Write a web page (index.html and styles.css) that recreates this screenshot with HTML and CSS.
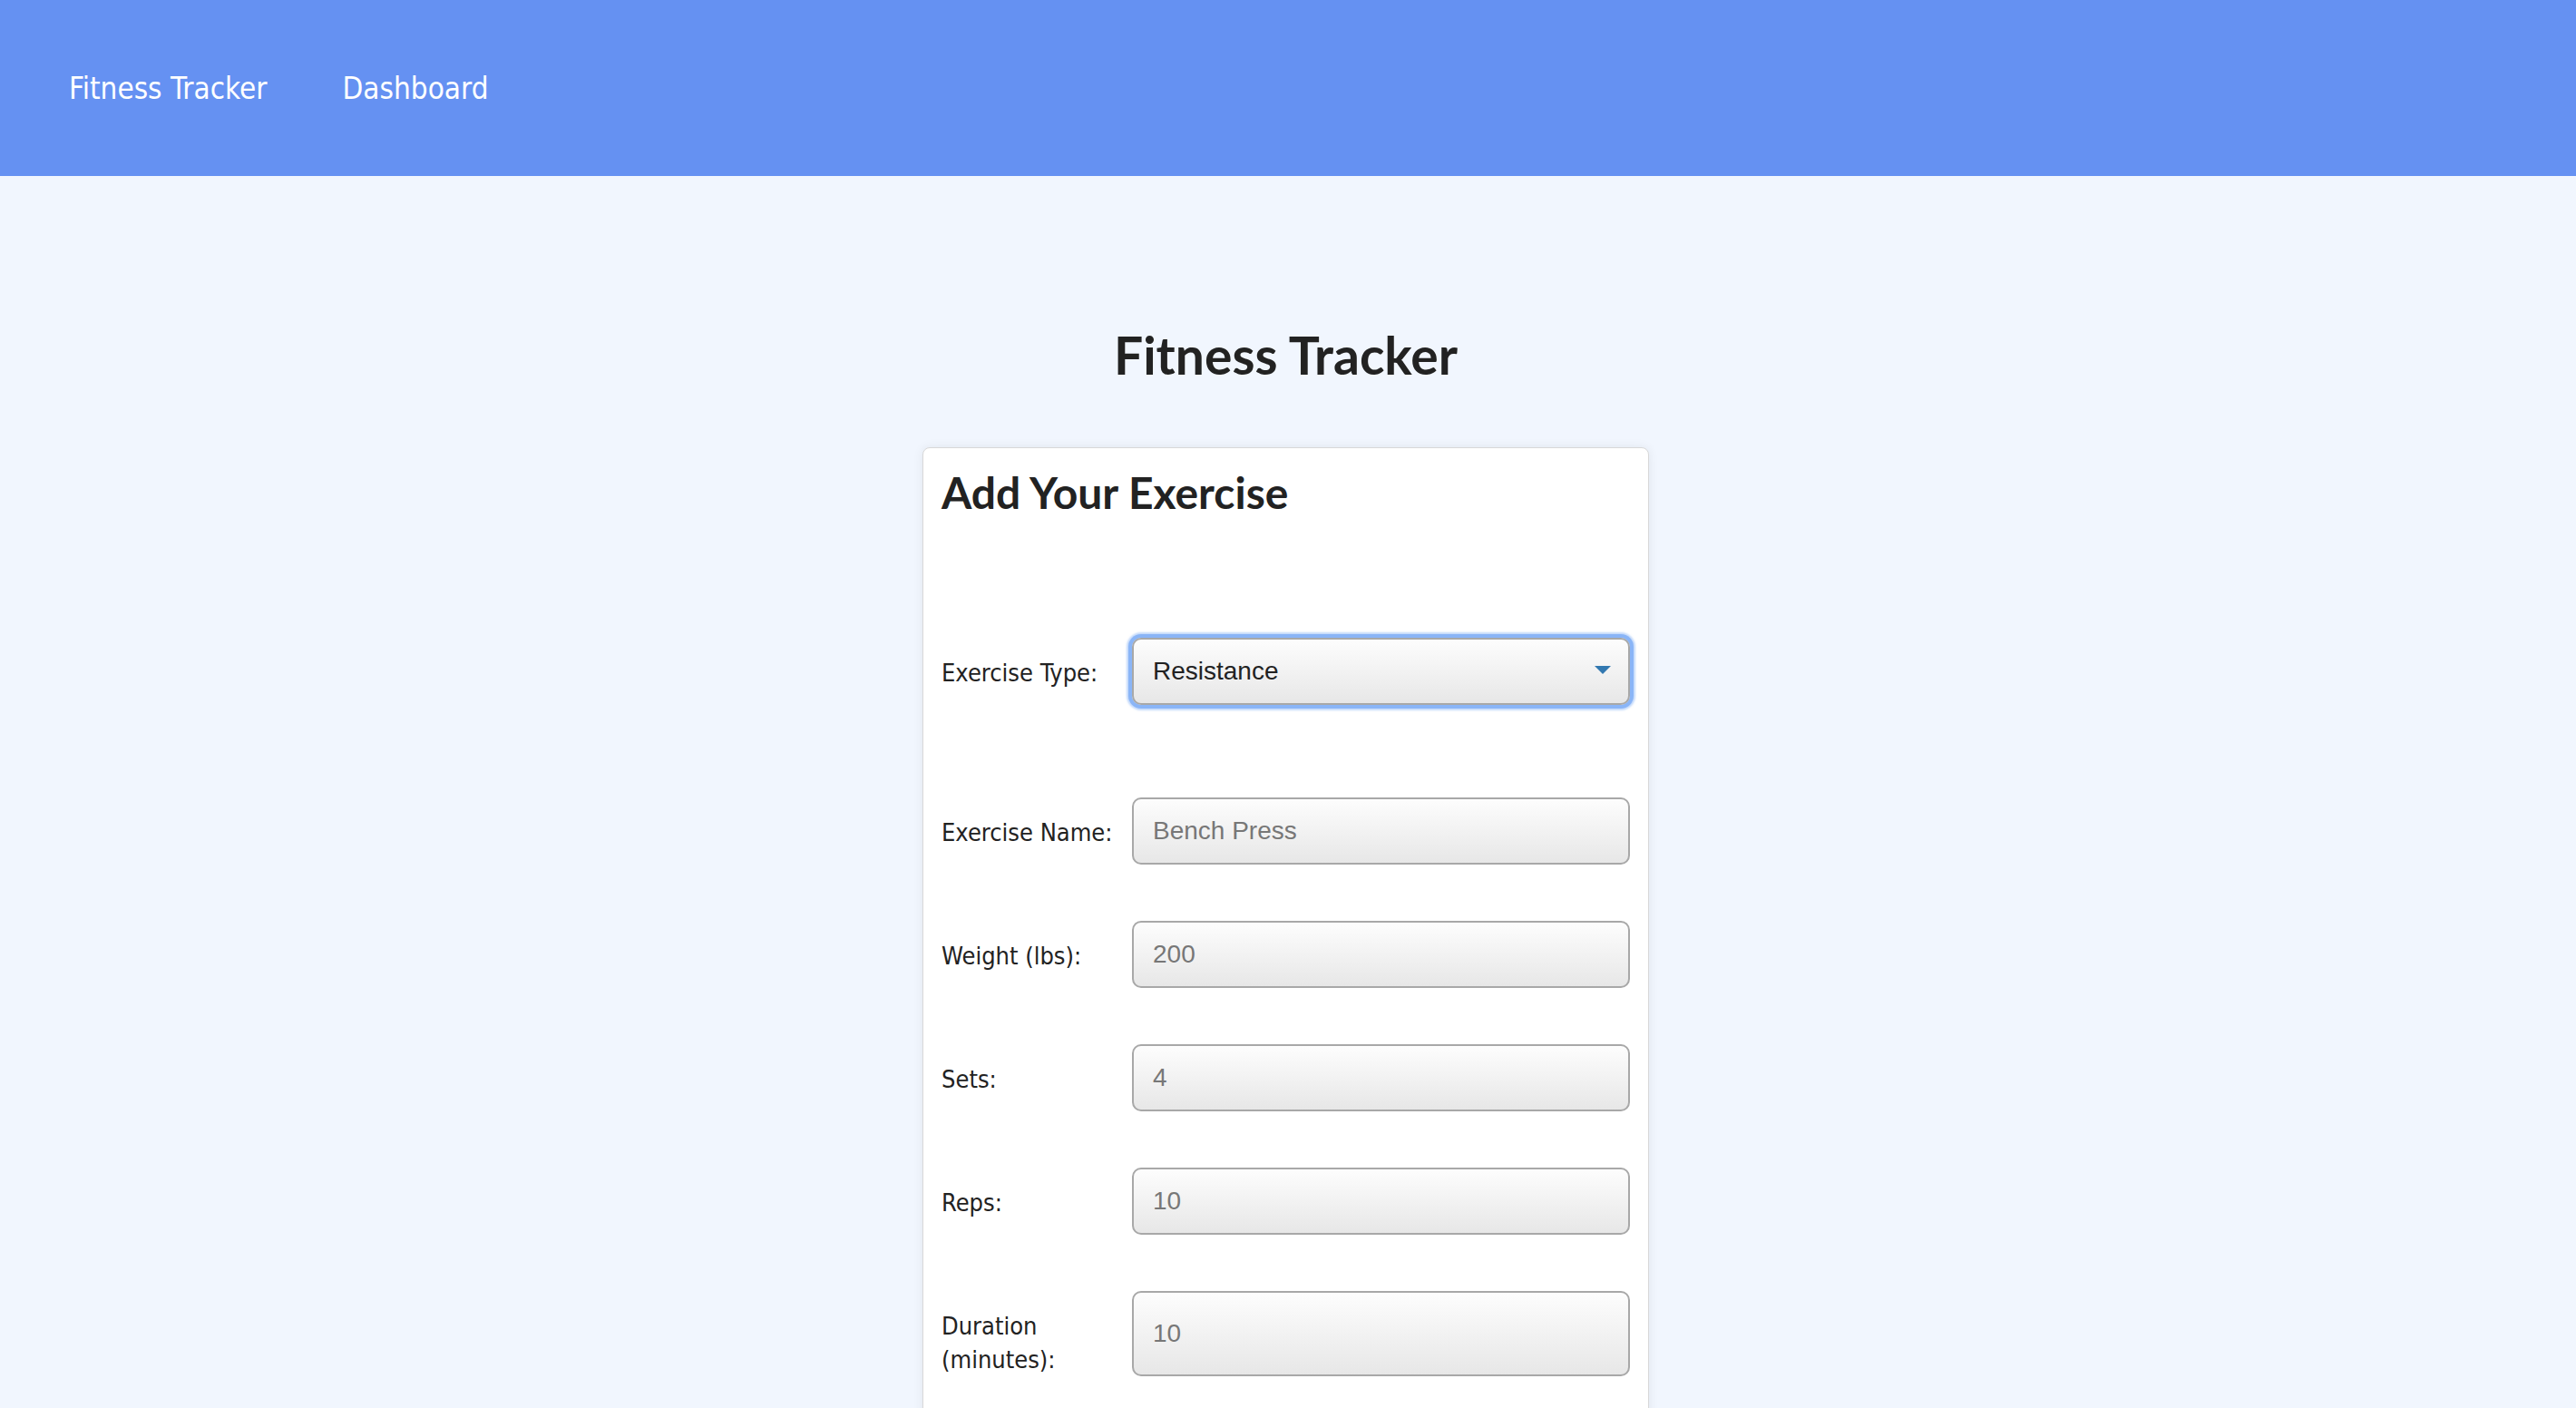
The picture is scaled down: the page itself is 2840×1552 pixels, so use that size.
FILE: index.html
```html
<!DOCTYPE html>
<html lang="en">
<head>
    <meta charset="UTF-8">
    <meta name="viewport" content="width=device-width, initial-scale=1.0">
    <title>Fitness Tracker</title>
    <link rel="stylesheet" href="styles.css">
</head>
<body>
    <nav class="navbar">
        <a class="nav-brand" href="#">Fitness Tracker</a>
        <a class="nav-link" href="#">Dashboard</a>
    </nav>

    <main class="page">
        <h1 class="page-title">Fitness Tracker</h1>

        <div class="card">
            <h2 class="card-title">Add Your Exercise</h2>

            <form class="exercise-form">
                <div class="form-row type-row">
                    <label for="type">Exercise Type:</label>
                    <div class="select-wrap">
                        <select id="type" class="form-input is-focused">
                            <option value="resistance">Resistance</option>
                            <option value="cardio">Cardio</option>
                        </select>
                        <!-- dropdown caret -->
                        <svg class="select-caret" width="18" height="9" viewBox="0 0 18 9">
                            <path d="M0 0 H18 L9 9 Z" fill="#3278b0"/>
                        </svg>
                    </div>
                </div>

                <div class="form-row">
                    <label for="name">Exercise Name:</label>
                    <input id="name" class="form-input" type="text" placeholder="Bench Press">
                </div>

                <div class="form-row">
                    <label for="weight">Weight (lbs):</label>
                    <input id="weight" class="form-input" type="number" placeholder="200">
                </div>

                <div class="form-row">
                    <label for="sets">Sets:</label>
                    <input id="sets" class="form-input" type="number" placeholder="4">
                </div>

                <div class="form-row">
                    <label for="reps">Reps:</label>
                    <input id="reps" class="form-input" type="number" placeholder="10">
                </div>

                <div class="form-row">
                    <label for="duration">Duration (minutes):</label>
                    <input id="duration" class="form-input" type="number" placeholder="10">
                </div>
            </form>
        </div>
    </main>
</body>
</html>
```

FILE: styles.css
```css
body {
    font-family: Tahoma, "DejaVu Sans Condensed", "DejaVu Sans", sans-serif;
    background-color: #f1f6fe;
    color: #222;
    margin: 0;
}

.navbar {
    background-color: #6591f2;
    height: 194px;
    display: flex;
    align-items: center;
    gap: 83px;
    padding-left: 76px;
}

.navbar a {
    color: white;
    text-decoration: none;
    font-size: 33px;
}

.page {
    padding: 163px 5px 40px 0;
}

.page-title {
    font-family: Lato, sans-serif;
    font-weight: bold;
    font-size: 57px;
    line-height: 1.2;
    text-align: center;
    margin: 0;
}

.card {
    width: 801px;
    box-sizing: border-box;
    margin: 68px auto 0;
    padding: 20px;
    background-color: white;
    border: 1px solid #d8d8d8;
    border-radius: 8px;
    box-shadow: 0 0 12px rgba(0, 0, 0, 0.07);
}

.card-title {
    font-family: Lato, sans-serif;
    font-weight: bold;
    font-size: 48px;
    line-height: 1.2;
    margin: 0 0 131px;
}

.form-row {
    display: grid;
    grid-template-columns: 190px 1fr;
    column-gap: 20px;
    margin-bottom: 62px;
}

.type-row {
    margin-bottom: 102px;
}

.form-row label {
    font-size: 27px;
    line-height: 37px;
    padding-top: 20px;
}

.form-input {
    box-sizing: border-box;
    width: 100%;
    height: 100%;
    min-height: 74px;
    margin: 0;
    padding: 0 21px;
    font-family: "Liberation Sans", Arial, sans-serif;
    font-size: 28px;
    color: #222;
    background: linear-gradient(to bottom, #fdfdfd, #e7e7e7);
    border: 2px solid #a8a8a8;
    border-radius: 10px;
    outline: none;
    appearance: none;
    -moz-appearance: textfield;
}

.form-input::placeholder {
    color: #777;
}

.form-input::-webkit-inner-spin-button,
.form-input::-webkit-outer-spin-button {
    -webkit-appearance: none;
}

.is-focused {
    box-shadow: 0 0 0 4px #8ab5f7, 0 0 2px 6px rgba(138, 181, 247, 0.5);
}

.select-wrap {
    position: relative;
}

.select-caret {
    position: absolute;
    right: 21px;
    top: 31px;
    pointer-events: none;
}
```
